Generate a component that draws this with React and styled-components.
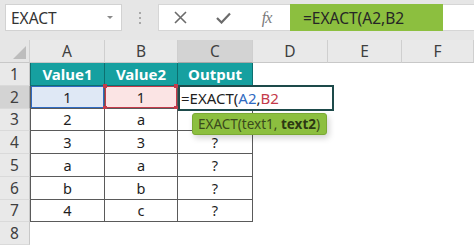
import { Fragment } from "react";
import styled, { createGlobalStyle } from "styled-components";

const Global = createGlobalStyle`
  html, body {
    margin: 0;
    padding: 0;
    background: #ffffff;
    overflow: hidden;
  }
  body {
    font-family: "Noto Sans", "Liberation Sans", sans-serif;
  }
`

const Window = styled.div`
  width: 474px;
  height: 245px;
  overflow: hidden;
  background: #ffffff;
`

const Toolbar = styled.div`
  height: 40px;
  box-sizing: border-box;
  padding: 4px 0 0 5px;
  background: #e6e6e6;
  display: flex;
  align-items: flex-start;
`

const NameBox = styled.div`
  width: 117px;
  height: 27px;
  box-sizing: border-box;
  background: #ffffff;
  border: 1px solid #d2d2d2;
  display: flex;
  align-items: center;
  justify-content: space-between;
  padding: 0 8px 0 5px;
  font-size: 15.5px;
  color: #333333;
`

const Caret = styled.span`
  width: 0;
  height: 0;
  border-left: 3px solid transparent;
  border-right: 3px solid transparent;
  border-top: 3px solid #8a8a8a;
`

const Grip = styled.div`
  width: 36px;
  height: 27px;
  display: flex;
  flex-direction: column;
  align-items: center;
  justify-content: center;
  gap: 3px;

  i {
    width: 2px;
    height: 2px;
    background: #a8a8a8;
  }
`

const FormulaArea = styled.div`
  flex: 1;
  height: 27px;
  box-sizing: border-box;
  background: #ffffff;
  border: 1px solid #d6d6d6;
  border-right: none;
  display: flex;
  align-items: stretch;
`

const IconBtn = styled.div`
  width: 43px;
  display: flex;
  align-items: center;
  justify-content: center;
  color: #6b6b6b;
`

const Fx = styled.span`
  font-family: "Liberation Serif", "DejaVu Serif", serif;
  font-style: italic;
  font-size: 16px;
  color: #7a7a7a;
  letter-spacing: -1px;
`

const FormulaInput = styled.div`
  width: 153px;
  margin: -1px 0 -1px 2px;
  background: #8cbf3f;
  display: flex;
  align-items: center;
  padding-left: 13px;
  box-sizing: border-box;
  font-size: 15.5px;
  color: #262626;
`

const Sheet = styled.div`
  position: relative;
  display: grid;
  grid-template-columns: 30px 75px 73px 75px 75px 74px 1fr;
  grid-template-rows: 23px repeat(8, 22.75px);
  font-size: 14.5px;
`

const Corner = styled.div`
  background: #e6e6e6;
  border-right: 1px solid #d0d0d0;
  border-bottom: 1px solid #c8c8c8;
  position: relative;

  &::after {
    content: "";
    position: absolute;
    right: 3px;
    bottom: 3px;
    width: 0;
    height: 0;
    border-left: 13px solid transparent;
    border-bottom: 13px solid #bdbdbd;
  }
`

const ColHead = styled.div`
  background: ${p => (p.$active ? "#d3d3d3" : "#e9e9e9")};
  border-right: 1px solid #cfcfcf;
  border-bottom: 1px solid ${p => (p.$active ? "#a9a9a9" : "#c8c8c8")};
  display: flex;
  align-items: center;
  justify-content: center;
  color: #3f3f3f;
  font-size: 15.5px;
`

const RowHead = styled.div`
  background: ${p => (p.$active ? "#d3d3d3" : "#e9e9e9")};
  border-right: 1px solid ${p => (p.$active ? "#a9a9a9" : "#c8c8c8")};
  border-bottom: 1px solid #dadada;
  display: flex;
  align-items: center;
  justify-content: center;
  color: #3f3f3f;
  font-size: 15.5px;
`

const Title = styled.div`
  background: #16a0a0;
  color: #ffffff;
  font-weight: 700;
  font-size: 15px;
  border-right: 1px solid #0d7070;
  border-bottom: 1px solid #0d7070;
  border-left: ${p => (p.$first ? "1px solid #0d7070" : "none")};
  display: flex;
  align-items: center;
  justify-content: center;
`

const Cell = styled.div`
  position: relative;
  box-sizing: border-box;
  background: ${p => p.$bg || "#ffffff"};
  border-right: ${p => (p.$table ? "1px solid #5a5a5a" : "none")};
  border-bottom: ${p => (p.$table ? "1px solid #5a5a5a" : "none")};
  border-left: ${p => (p.$first ? "1px solid #5a5a5a" : "none")};
  box-shadow: ${p => (p.$ring ? `inset 0 0 0 1px ${p.$ring}` : "none")};
  display: flex;
  align-items: center;
  justify-content: center;
  color: #1e1e1e;

  ${p =>
    p.$handles &&
    `
    &::before, &::after {
      content: "";
      position: absolute;
      left: -2px;
      width: 4px;
      height: 4px;
      background: ${p.$ring};
      box-shadow: 71px 0 0 ${p.$ring};
    }
    &::before { top: -2px; }
    &::after { bottom: -2px; }
  `}
`

const EditCell = styled.div`
  position: absolute;
  left: 178px;
  top: 45px;
  width: 156px;
  height: 26px;
  box-sizing: border-box;
  background: #ffffff;
  border: 2px solid #1d4a4a;
  display: flex;
  align-items: center;
  padding-left: 1px;
  font-size: 15px;
  color: #1e1e1e;
`

const Ref = styled.span`
  color: ${p => p.$color};
`

const Tip = styled.div`
  position: absolute;
  left: 192px;
  top: 73px;
  width: 135px;
  height: 22px;
  box-sizing: border-box;
  background: #8cbf3f;
  border: 1px solid #7aa934;
  border-radius: 3px;
  box-shadow: 2px 3px 6px rgba(0, 0, 0, 0.18);
  display: flex;
  align-items: center;
  padding-left: 5px;
  font-size: 13.5px;
  color: #3a4a1c;

  b {
    font-weight: 700;
    color: #2c3812;
  }
`

const cols = ["A", "B", "C", "D", "E", "F"];

// row 3's output cell sits under the tooltip, so it is left empty
const rows = [
  ["2", "a", ""],
  ["3", "3", "?"],
  ["a", "a", "?"],
  ["b", "b", "?"],
  ["4", "c", "?"],
];

function Blank() {
  return (
    <>
      <Cell />
      <Cell />
      <Cell />
    </>
  );
}

export default function App() {
  return (
    <Window>
      <Global />
      <Toolbar>
        <NameBox>
          <span>EXACT</span>
          <Caret />
        </NameBox>
        <Grip>
          <i />
          <i />
          <i />
        </Grip>
        <FormulaArea>
          <IconBtn>
            <svg width="13" height="13" viewBox="0 0 13 13">
              <path d="M1 1 L12 12 M12 1 L1 12" stroke="#6b6b6b" strokeWidth="1.6" fill="none" />
            </svg>
          </IconBtn>
          <IconBtn>
            <svg width="15" height="12" viewBox="0 0 15 12">
              <path d="M1 6 L5.5 10.5 L14 1.5" stroke="#6b6b6b" strokeWidth="2.2" fill="none" />
            </svg>
          </IconBtn>
          <IconBtn>
            <Fx>fx</Fx>
          </IconBtn>
          <FormulaInput>=EXACT(A2,B2</FormulaInput>
        </FormulaArea>
      </Toolbar>

      <Sheet>
        <Corner />
        {cols.map(c => (
          <ColHead key={c} $active={c === "C"}>{c}</ColHead>
        ))}

        <RowHead>1</RowHead>
        <Title $first>Value1</Title>
        <Title>Value2</Title>
        <Title>Output</Title>
        <Blank />

        <RowHead $active>2</RowHead>
        <Cell $table $first $bg="#dfe8f5" $ring="#2f6ac2">1</Cell>
        <Cell $table $bg="#fbe4e4" $ring="#c43a4a" $handles>1</Cell>
        <Cell $table />
        <Blank />

        {rows.map((r, i) => (
          <Fragment key={i}>
            <RowHead>{i + 3}</RowHead>
            <Cell $table $first>{r[0]}</Cell>
            <Cell $table>{r[1]}</Cell>
            <Cell $table>{r[2]}</Cell>
            <Blank />
          </Fragment>
        ))}

        <RowHead>8</RowHead>
        <Cell />
        <Cell />
        <Cell />
        <Blank />

        <EditCell>
          =EXACT(<Ref $color="#2f6ac2">A2</Ref>,<Ref $color="#c43a4a">B2</Ref>
        </EditCell>
        <Tip>
          EXACT(text1,&nbsp;<b>text2</b>)
        </Tip>
      </Sheet>
    </Window>
  );
}
